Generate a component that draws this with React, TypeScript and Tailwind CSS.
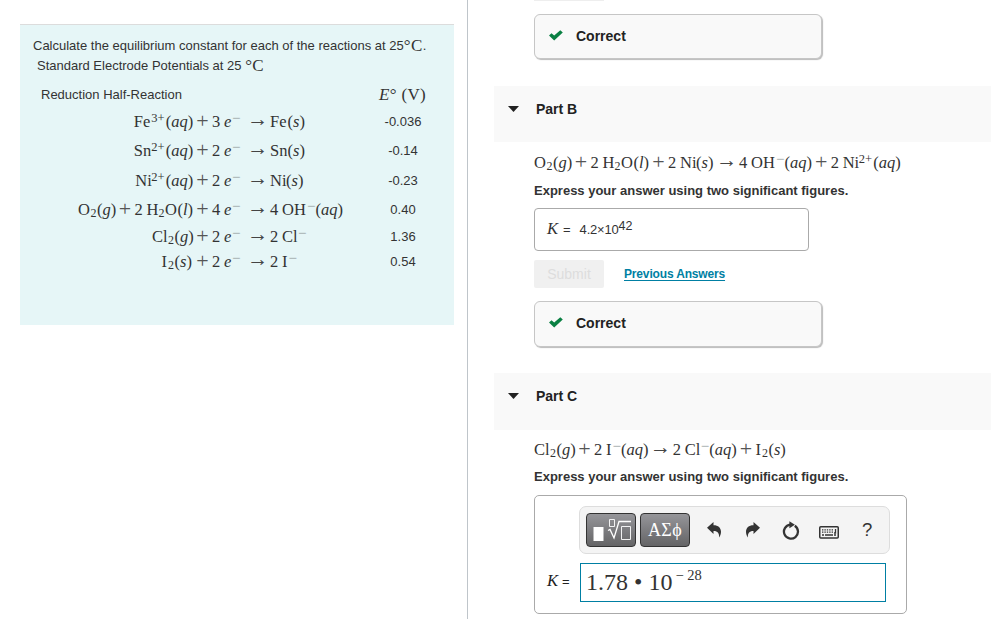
import React from 'react';

const tokenStyles: Record<string, string> = {
  Fe: 'w-[17.5px]',
  Sn: 'w-[17.5px]',
  Ni: 'w-[16px]',
  O: 'w-[12.5px]',
  H: 'w-[12px]',
  OH: 'w-[25px]',
  Cl: 'w-[16px]',
  I: 'w-[6.5px]',
  e: 'w-[8px] italic',
  '_2': 'w-[6.5px] text-[12px] top-[3px]',
  '^3+': 'w-[14.5px] text-[12.5px] -top-[4px]',
  '^2+': 'w-[14.5px] text-[12.5px] -top-[4px]',
  '^−': 'w-[8.5px] text-[15px] -top-[4px] text-[#99a3a3]',
  '(aq)': 'w-[27.2px]',
  '(g)': 'w-[18.5px]',
  '(s)': 'w-[18.5px]',
  '(l)': 'w-[15.5px]',
  '+': 'w-[19px] text-[22px] -top-px text-[#555] justify-center',
  '→': 'w-[24.5px] text-[21px] -top-[3px] text-[#444] justify-center',
};

function Formula({ text }: { text: string }) {
  return (
    <span className="flex h-5 items-center whitespace-pre font-['Liberation_Serif',serif] text-[16.5px] leading-5 text-[#333]">
      {text.split(' ').map((t, i) => {
        const state = t.startsWith('(');
        return (
          <span key={i} className={`relative flex h-5 shrink-0 ${tokenStyles[t] ?? 'w-[12px]'}`}>
            {state ? (
              <>
                (<i>{t.slice(1, -1)}</i>)
              </>
            ) : (
              t.replace(/[_^]/, '')
            )}
          </span>
        );
      })}
    </span>
  );
}

const halfReactions = [
  { h: 'h-[29px]', left: 'Fe ^3+ (aq) + 3 e ^−', right: '→ Fe (s)', v: '-0.036' },
  { h: 'h-[30px]', left: 'Sn ^2+ (aq) + 2 e ^−', right: '→ Sn (s)', v: '-0.14' },
  { h: 'h-[30px]', left: 'Ni ^2+ (aq) + 2 e ^−', right: '→ Ni (s)', v: '-0.23' },
  { h: 'h-[28px]', left: 'O _2 (g) + 2 H _2 O (l) + 4 e ^−', right: '→ 4 OH ^− (aq)', v: '0.40' },
  { h: 'h-[25px]', left: 'Cl _2 (g) + 2 e ^−', right: '→ 2 Cl ^−', v: '1.36' },
  { h: 'h-[26px]', left: 'I _2 (s) + 2 e ^−', right: '→ 2 I ^−', v: '0.54' },
];

const serif = "font-['Liberation_Serif',serif]";

function Degrees() {
  return <span className={`${serif} text-[17px] leading-5 tracking-[0.4px]`}>°C</span>;
}

function Problem() {
  return (
    <section className="ml-5 mt-6 h-[301px] w-[434px] border-t border-[#dcdcdc] bg-[#e6f6f7] pt-[11px] text-[13px] text-[#333]">
      <p className="ml-[13px] flex h-5 items-center whitespace-pre">
        <span>Calculate the equilibrium constant for each of the reactions at 25</span>
        <Degrees />.
      </p>
      <p className="ml-[17px] flex h-5 items-center whitespace-pre">
        <span>Standard Electrode Potentials at 25 </span>
        <Degrees />
      </p>
      <div className="mb-[2px] mt-[8px] flex h-[21px] items-center">
        <span className="ml-[21px] w-[319px]">Reduction Half-Reaction</span>
        <span className={`${serif} w-[86px] whitespace-pre pl-[19px] text-[17px] leading-5 tracking-[0.35px]`}>
          <i>E</i>° (V)
        </span>
      </div>
      {halfReactions.map((r) => (
        <div key={r.v} className={`flex items-center ${r.h}`}>
          <div className="flex w-[220.5px] justify-end">
            <Formula text={r.left} />
          </div>
          <div className="ml-[5px] w-[114.5px]">
            <Formula text={r.right} />
          </div>
          <span className="w-[86px] text-center">{r.v}</span>
        </div>
      ))}
    </section>
  );
}

function Correct({ className }: { className: string }) {
  return (
    <div className={`ml-10 flex w-[288px] rounded-[6px] border border-[#c6c6c6] bg-[#f9f9f9] pl-[14px] shadow-[1px_1px_1px_#bbb] ${className}`}>
      <svg className="mt-[15px] h-[12px] w-[14px]" viewBox="0 0 14 12">
        <path d="M0 5.6 2.5 3.2 5.2 5.6 11.3.2 13.8 2.5 5.2 10.6z" fill="#0a8043" />
      </svg>
      <b className="ml-[13px] mt-[11px] h-5 text-[14px] leading-5">Correct</b>
    </div>
  );
}

function PartHeader({ title, className }: { title: string; className: string }) {
  return (
    <div className={`flex bg-[#f9f9f9] ${className}`}>
      <svg className="ml-[14px] mt-[20px] h-[6px] w-[11px]" viewBox="0 0 11 6">
        <path d="M0 0h11L5.5 6z" fill="#222" />
      </svg>
      <b className="ml-[17px] mt-[13px] h-5 text-[14px] leading-5">{title}</b>
    </div>
  );
}

const arrowPath = 'M0 5.8 6.5 0v3.2c4.8 0 7.5 2.7 7.5 6.6 0 2.2-.7 4.2-1.9 5.6.3-4-1.2-6.5-5.6-6.5v3z';

function EquationEditor() {
  const keyButton =
    'flex h-[34px] w-[50px] items-center justify-center rounded-[4px] border border-[#333] bg-linear-to-b from-[#96969a] to-[#646466] text-white';
  return (
    <div className="ml-10 mt-[8px] h-[119px] w-[373px] rounded-[5px] border border-[#aaa] pt-[10px]">
      <div className="ml-[44px] flex h-[48px] w-[311px] items-center rounded-[7px] border border-[#ddd] bg-[#f4f4f4] pl-[6px] text-[#333]">
        <button className={keyButton}>
          <svg className="h-[24px] w-[40px]" viewBox="0 0 40 24" fill="none" stroke="white">
            <path d="M2.5 9h10v14h-10z" fill="white" stroke="none" />
            <path d="M18.5 1.5h5v7h-5zM30.5 8.5h9v13h-9z" strokeWidth=".9" />
            <path d="M17 12.5l2-1 4 8.5L28 3.5h12" strokeWidth="1.3" />
          </svg>
        </button>
        <button className={`${keyButton} ${serif} ml-[4px] text-[18px] tracking-[0.3px]`}>ΑΣϕ</button>
        <svg className="ml-[17px] h-[16px] w-[14px]" viewBox="0 0 14 16" fill="#333">
          <path d={arrowPath} />
        </svg>
        <svg className="ml-[25px] h-[16px] w-[14px] -scale-x-100" viewBox="0 0 14 16" fill="#333">
          <path d={arrowPath} />
        </svg>
        <svg className="ml-[22px] h-[19px] w-[18px]" viewBox="0 0 18 19" fill="none">
          <path d="M12.8 4.8A7 7 0 1 1 8.2 3.7" stroke="#333" strokeWidth="2.3" />
          <path d="M7.4.2 12.9 3.8 7.4 7.2z" fill="#333" />
        </svg>
        <svg className="ml-[19px] mt-[5px] h-[13px] w-[20px]" viewBox="0 0 20 13" fill="none" stroke="#333">
          <rect x=".75" y=".75" width="18.5" height="11.2" rx="1" strokeWidth="1.5" />
          <path d="M3 3.8h12M3 6.2h12" strokeWidth="1.3" strokeDasharray="1.4 1" />
          <path d="M3 9h2M6 9h8M15 9h2M16.5 3v4h-1.5" strokeWidth="1.3" />
        </svg>
        <span className="ml-[23px] text-[18.5px] leading-5">?</span>
      </div>
      <div className="mt-[9px] flex h-[39px] items-center">
        <span className="flex w-[45px] items-baseline gap-[4px] pb-[3px] pl-[12px]">
          <i className={`${serif} text-[16.5px]`}>K</i>
          <span className="text-[13px]">=</span>
        </span>
        <div className={`${serif} flex h-[39px] w-[306px] items-center whitespace-pre border border-[#007fa3] pb-px pl-[5px] text-[24px] text-[#333]`}>
          <span>1.78 • 10</span>
          <span className="relative -top-[6px] ml-[3px] text-[14.5px]">− 28</span>
        </div>
      </div>
    </div>
  );
}

export default function App() {
  return (
    <main className="flex h-[619px] w-[991px] overflow-hidden bg-white font-['Liberation_Sans',Arial,sans-serif] text-[#222]">
      <div className="w-[468px] shrink-0 border-r border-[#bfc5ca]">
        <Problem />
      </div>
      <div className="flex w-[523px] flex-col pl-[26px]">
        <div className="ml-10 h-px w-[70px] shrink-0 bg-[#eee]" />
        <Correct className="mt-[13px] h-[45px]" />
        <PartHeader title="Part B" className="mt-[27px] h-[56px]" />
        <div className="ml-10 mt-[11px] h-5">
          <Formula text="O _2 (g) + 2 H _2 O (l) + 2 Ni (s) → 4 OH ^− (aq) + 2 Ni ^2+ (aq)" />
        </div>
        <b className="ml-10 mt-[8px] h-5 text-[13px] leading-5 text-[#333]">Express your answer using two significant figures.</b>
        <div className="ml-10 mt-[7px] flex h-[43px] w-[275px] items-center rounded-[4px] border border-[#aaa] pl-[12px] text-[13px] text-[#333]">
          <i className={`${serif} text-[16.5px]`}>K</i>
          <span className="ml-[5px]">=</span>
          <span className="ml-[9px] tracking-[-0.2px]">4.2×10</span>
          <span className="relative -top-[3px] text-[12.5px]">42</span>
        </div>
        <div className="ml-10 mt-[9px] flex h-[28px] items-center">
          <button className="h-[28px] w-[70px] rounded-[2px] bg-[#f0f0f0] text-[14px] text-[#ddd]">Submit</button>
          <a className="ml-5 text-[12px] font-bold tracking-[-0.16px] text-[#007fa3] underline underline-offset-2">Previous Answers</a>
        </div>
        <Correct className="mt-[13px] h-[46px]" />
        <PartHeader title="Part C" className="mt-[26px] h-[57px]" />
        <div className="ml-10 mt-[10px] h-5">
          <Formula text="Cl _2 (g) + 2 I ^− (aq) → 2 Cl ^− (aq) + I _2 (s)" />
        </div>
        <b className="ml-10 mt-[7px] h-5 text-[13px] leading-5 text-[#333]">Express your answer using two significant figures.</b>
        <EquationEditor />
      </div>
    </main>
  );
}
